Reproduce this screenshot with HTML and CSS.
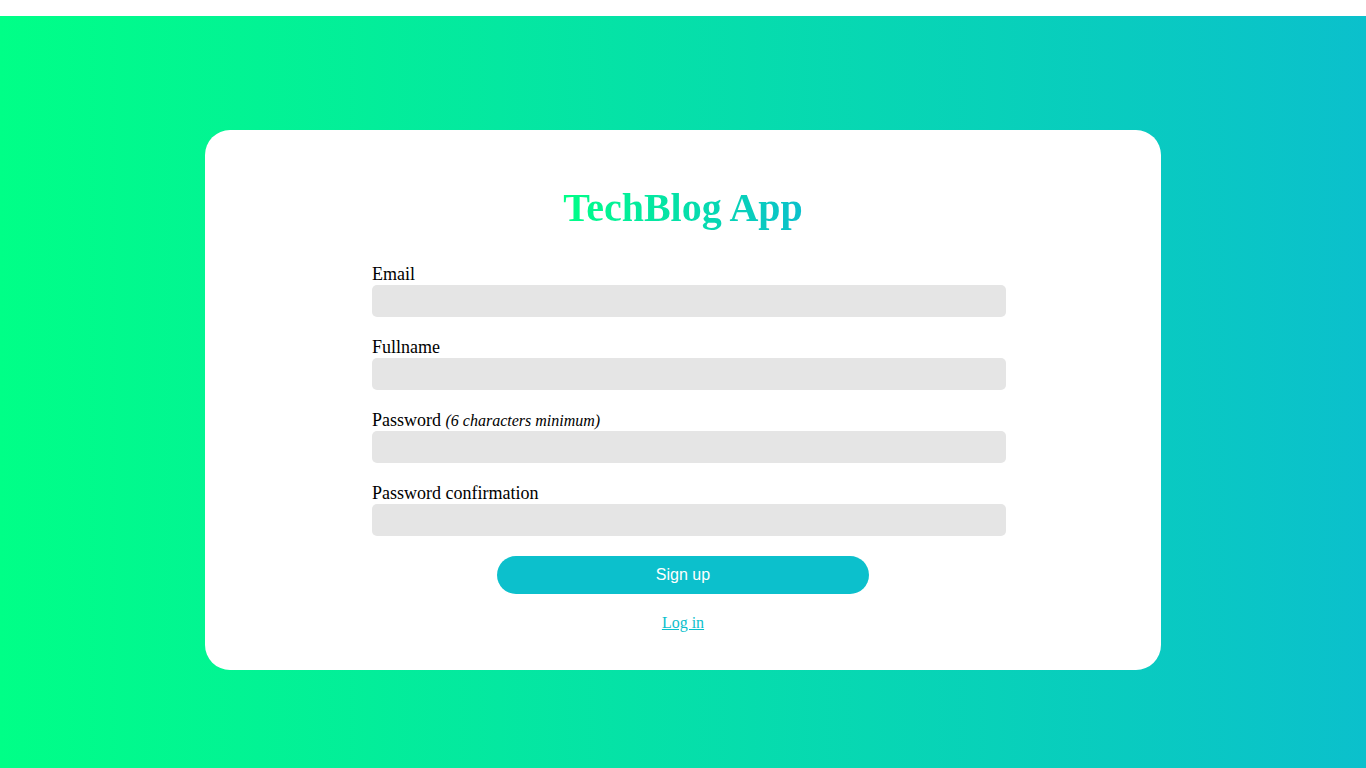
FILE: index.html
```html
<!DOCTYPE html>
<html lang="en">
<head>
<meta charset="utf-8">
<title>TechBlog App - Sign up</title>
<link rel="stylesheet" href="styles.css">
</head>
<body>
<div class="page">
  <main class="card">
    <h1 class="title">TechBlog App</h1>
    <form class="form">
      <div class="field">
        <label class="label" for="email">Email</label>
        <input class="input" id="email" type="email" autofocus>
      </div>
      <div class="field">
        <label class="label" for="fullname">Fullname</label>
        <input class="input" id="fullname" type="text">
      </div>
      <div class="field">
        <label class="label" for="password">Password <em class="hint">(6 characters minimum)</em></label>
        <input class="input" id="password" type="password">
      </div>
      <div class="field">
        <label class="label" for="password_confirmation">Password confirmation</label>
        <input class="input" id="password_confirmation" type="password">
      </div>
      <div class="actions">
        <button class="button" type="button">Sign up</button>
      </div>
    </form>
    <div class="links">
      <a class="link" href="#">Log in</a>
    </div>
  </main>
</div>
</body>
</html>
```
FILE: styles.css
```css
html, body {
  margin: 0;
  padding: 0;
}

body {
  font-family: "Liberation Serif", "Times New Roman", serif;
  color: #000;
}

.page {
  margin-top: 16px;
  width: 100vw;
  height: 100vh;
  background: linear-gradient(to right, #00ff87, #0bc0cc);
  display: flex;
  align-items: center;
  justify-content: center;
}

.card {
  width: 70%;
  box-sizing: border-box;
  background: #fff;
  border-radius: 25px;
  padding: 55px 0 38px;
  display: flex;
  flex-direction: column;
  align-items: center;
}

.title {
  margin: 0;
  font-size: 40px;
  font-weight: bold;
  line-height: 46px;
  background: linear-gradient(to right, #00ff87, #0bc0cc);
  -webkit-background-clip: text;
  background-clip: text;
  color: transparent;
}

.form {
  width: 622px;
  margin-top: 33px;
  display: flex;
  flex-direction: column;
}

.field {
  display: flex;
  flex-direction: column;
  margin-bottom: 20px;
}

.label {
  font-size: 18px;
  line-height: 21px;
}

.hint {
  font-size: 16px;
}

.input {
  width: 634px;
  height: 32px;
  box-sizing: border-box;
  border: none;
  border-radius: 5px;
  background: #e5e5e5;
  padding: 0 9px;
  font-family: "Liberation Sans", Arial, sans-serif;
  font-size: 16px;
  outline: none;
  caret-color: #000;
}

.actions {
  display: flex;
  justify-content: center;
}

.button {
  width: 372px;
  height: 38px;
  border: none;
  border-radius: 19px;
  background: #0cc0cc;
  color: #fff;
  font-family: "Liberation Sans", Arial, sans-serif;
  font-size: 16px;
  cursor: pointer;
}

.links {
  margin-top: 20px;
  font-size: 16px;
  line-height: 18px;
}

.link {
  color: #0bc0cc;
  text-decoration: underline;
}
```
